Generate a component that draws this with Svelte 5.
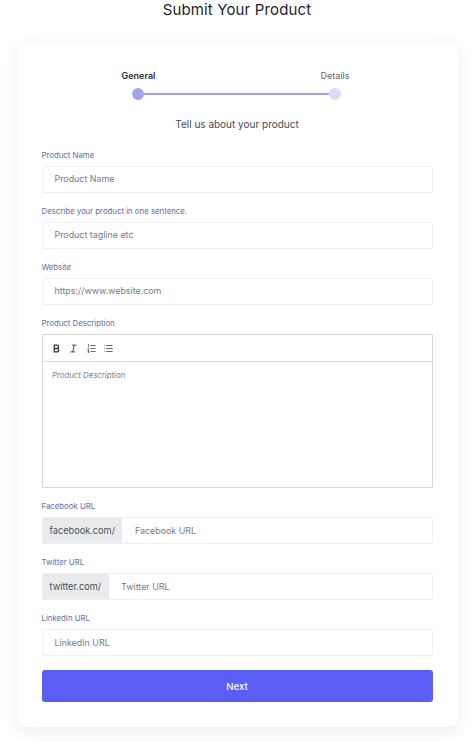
<script>
  const top = [
    { label: 'Product Name', ph: 'Product Name' },
    { label: 'Describe your product in one sentence.', ph: 'Product tagline etc' },
    { label: 'Website', ph: 'https://www.website.com' }
  ];
  const social = [
    { label: 'Facebook URL', prefix: 'facebook.com/', ph: 'Facebook URL' },
    { label: 'Twitter URL', prefix: 'twitter.com/', ph: 'Twitter URL' },
    { label: 'LinkedIn URL', prefix: '', ph: 'LinkedIn URL' }
  ];
</script>

<div class="page">
  <h1>Submit Your Product</h1>
  <main class="card">
    <div class="steps">
      <div class="step-labels"><span class="active">General</span><span>Details</span></div>
      <div class="track"><i class="dot on"></i><i class="line"></i><i class="dot off"></i></div>
    </div>
    <p class="sub">Tell us about your product</p>

    {#each top as f}
      <div class="field">
        <label>{f.label}</label>
        <div class="input raised"><span class="ph">{f.ph}</span></div>
      </div>
    {/each}

    <div class="field">
      <label>Product Description</label>
      <div class="editor">
        <div class="toolbar">
          <svg viewBox="0 0 12 12"><path d="M3 1.5h3.6a2.2 2.2 0 0 1 0 4.5H3zM3 6h4.2a2.3 2.3 0 0 1 0 4.5H3z" fill="none" stroke="#333" stroke-width="1.7"/></svg>
          <svg viewBox="0 0 12 12"><path d="M4 1.5h6M2 10.5h6M7 1.5 5 10.5" fill="none" stroke="#444" stroke-width="1.3"/></svg>
          <svg viewBox="0 0 12 12"><path d="M4.5 2h7M4.5 6h7M4.5 10h7M1.2 1l1-.3V4M1 6.2h1.6L1 8.4h1.8M1 9.3h1.7L1.6 10.5h1.1l-.3 1H1" fill="none" stroke="#444" stroke-width="1"/></svg>
          <svg viewBox="0 0 12 12"><path d="M3 2h8.5M3 6h8.5M3 10h8.5M.5 2h1M.5 6h1M.5 10h1" fill="none" stroke="#444" stroke-width="1.1"/></svg>
        </div>
        <div class="area">Product Description</div>
      </div>
    </div>

    {#each social as f}
      <div class="field">
        <label>{f.label}</label>
        <div class="input">
          {#if f.prefix}<span class="prefix">{f.prefix}</span>{/if}
          <span class="ph">{f.ph}</span>
        </div>
      </div>
    {/each}

    <button>Next</button>
  </main>
</div>

<style>
  :global(body) { margin: 0; background: #fff; font-family: Inter, "Liberation Sans", sans-serif; }
  .page { height: 742px; overflow: hidden; display: flex; flex-direction: column; align-items: center; }
  h1 { margin: 0; height: 43px; font-size: 15px; line-height: 19px; font-weight: 400; color: #1f2430; letter-spacing: 0.15px; }
  .card {
    box-sizing: border-box; width: 441px; height: 684px; padding: 27px 25px 0;
    background: #fff; border-radius: 10px; box-shadow: 0 4px 16px rgba(40, 50, 80, 0.09);
    display: flex; flex-direction: column;
  }
  .steps { margin-left: 80px; width: 228px; }
  .step-labels { display: flex; justify-content: space-between; font-size: 9px; line-height: 12px; color: #666; margin-bottom: 6px; }
  .active { font-weight: 600; color: #333; }
  .track { display: flex; align-items: center; margin: 0 0 0 10px; width: 209px; }
  .dot { width: 12px; height: 12px; border-radius: 50%; flex: none; }
  .on { background: #a3a5e8; }
  .off { background: #dcdcf5; }
  .line { flex: 1; height: 2px; background: #a3a5e8; }
  .sub { margin: 17px 0 0; text-align: center; font-size: 10px; line-height: 14px; color: #4a4a55; height: 32px; }
  .field { display: flex; flex-direction: column; margin-bottom: 12px; }
  label { font-size: 7.8px; line-height: 12px; color: #626da8; margin-bottom: 5px; }
  .input {
    box-sizing: border-box; height: 27px; display: flex; align-items: center;
    border: 1px solid #eef0f3; border-radius: 2px; font-size: 8.9px; overflow: hidden;
  }
  .raised { padding-bottom: 3px; }
  .ph { padding: 0 12px; color: #777b82; }
  .prefix {
    align-self: stretch; display: flex; align-items: center; padding: 0 7.5px 0 7px;
    background: #e9ecef; color: #495057; font-size: 9.2px;
  }
  .prefix + .ph { padding-left: 12.5px; }
  .editor { box-sizing: border-box; height: 154px; border: 1px solid #d5d7da; display: flex; flex-direction: column; border-radius: 1px; }
  .toolbar { height: 26px; flex: none; border-bottom: 1.5px solid #dcdee0; display: flex; align-items: center; gap: 8.6px; padding-left: 9px; }
  .toolbar svg { width: 9px; height: 9px; }
  .area { padding: 6.5px 9.5px; font-size: 7.8px; line-height: 12px; font-style: italic; color: #80838a; }
  button {
    height: 32px; margin-top: 2px; border: 0; border-radius: 3px; background: #5a5ef5; color: #fff;
    font: 500 9.6px Inter, "Liberation Sans", sans-serif;
  }
</style>
